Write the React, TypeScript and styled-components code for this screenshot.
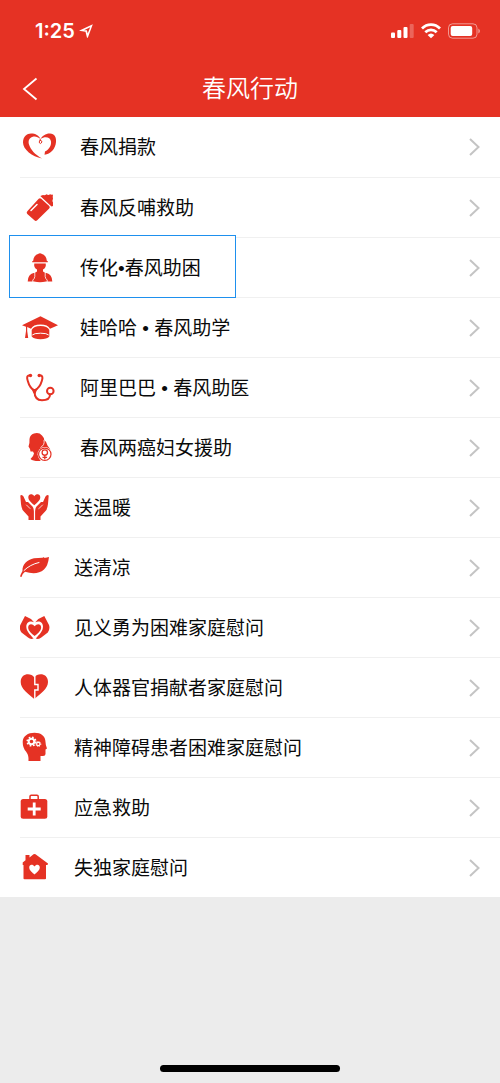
import React from 'react';
import styled, { createGlobalStyle } from 'styled-components';

const RED = '#e53224';

const GlobalStyle = createGlobalStyle`
  * { box-sizing: border-box; }
  body {
    margin: 0;
    background: #ececec;
    color: #0a0a0a;
    font-family: "Liberation Sans", "Noto Sans CJK SC", sans-serif;
  }
`;

const Page = styled.div`
  display: flex;
  flex-direction: column;
  min-height: 100vh;
`;

const Header = styled.header`
  background: ${RED};
  color: #fff;
`;

const StatusBar = styled.div`
  display: flex;
  align-items: center;
  justify-content: space-between;
  height: 60px;
  padding: 2px 20px 0 35px;
`;

const StatusGroup = styled.div<{ $gap: number }>`
  display: flex;
  align-items: center;
  gap: ${(p) => p.$gap}px;
`;

const Time = styled.time`
  font: 600 20px/24px Inter, sans-serif;
`;

const NavBar = styled.div`
  display: grid;
  grid-template-columns: 60px 1fr 60px;
  align-items: center;
  height: 57px;
`;

const BackButton = styled.button`
  display: flex;
  align-items: center;
  height: 54px;
  padding: 0 0 0 22px;
  border: 0;
  background: none;
  color: inherit;
  cursor: pointer;
`;

const Title = styled.h1`
  margin: 0;
  font-size: 24px;
  line-height: 32px;
  font-weight: 350;
  text-align: center;
`;

const List = styled.ul`
  margin: 0;
  padding: 0 0 0 20px;
  list-style: none;
  background: #fff;
`;

const Item = styled.li<{ $raised?: boolean }>`
  position: relative;
  z-index: ${(p) => (p.$raised ? 1 : 0)};
  height: 60px;

  & + & {
    border-top: 1px solid #f0f0f0;
  }
`;

const Highlight = styled.span`
  position: absolute;
  top: -3px;
  left: -11px;
  width: 227px;
  height: 63px;
  border: 1px solid #1e90ee;
  background: #fff;
  pointer-events: none;
`;

const RowLink = styled.a<{ $compact: boolean }>`
  position: relative;
  display: flex;
  align-items: center;
  gap: ${(p) => (p.$compact ? 24 : 20)}px;
  height: 100%;
  padding-right: 18px;
  color: inherit;
  text-decoration: none;
`;

const RowIcon = styled.svg<{ $compact: boolean }>`
  flex: none;
  width: ${(p) => (p.$compact ? 30 : 40)}px;
  height: 40px;
  fill: ${RED};
  stroke: none;
`;

const Label = styled.span`
  flex: 1;
  padding-top: 2px;
  font-size: 19px;
  line-height: 28px;
  white-space: nowrap;
`;

const HomeIndicator = styled.div`
  width: 36%;
  height: 7px;
  margin: auto auto 11px;
  border-radius: 4px;
  background: #000;
`;

const HEART = 'M0 4 C-2 1 -6 1.5 -6 5 C-6 8.5 -2 11 0 13 C2 11 6 8.5 6 5 C6 1.5 2 1 0 4Z';

const BrushHeart = (
  <>
    <path d="M22 31.500C12 29.500 3 22.500 3 15.500C3 9.500 7 6.500 11 6.500C15.500 6.500 19 8.500 20.500 12C18 9.800 15 9 12.800 9.800C9 11 8 14 9 17.500C10.500 22.500 15 27.500 22 31.500Z" />
    <path d="M20.500 12C22 9 26 6.300 30 6.500C34.500 7 36.500 10 36 15C35.500 22 30.500 27 24.500 27.800L25 24.500C29 22.500 31.500 18.500 31 14.500C30.500 10 25 8.800 20.500 12Z" />
    <path d="M20.500 12C18 15.500 20 17.500 21.300 16C22.500 14.500 21.500 13 20 13.500" fill="none" stroke={RED} />
  </>
);

const Bottle = (
  <>
    <path d="M18.700 10.800Q20 9.600 21.200 10.800L29.200 18Q30.400 19.200 29.200 20.500L17.200 32.300Q15.800 33.500 14.400 32.300L7.300 26Q6 24.700 7.300 23.300Z" />
    <path d="M20.300 8L23 7Q25 7.500 26.500 6.300Q28.500 7.500 30 6.300Q31.500 7 33 6.500Q32.500 9 33 10.500Q32 12.500 33 14.500V18L31.500 18.500Z" />
    <path d="M11 22.500L17 16.500" stroke="#fff" strokeWidth="1.500" strokeLinecap="round" />
  </>
);

const Worker = (
  <>
    <path d="M12.200 14.300V13.300L13.200 12.800Q13.500 7.500 18 6Q20 4.500 22 6Q26.500 7.500 26.800 12.800L27.800 13.300V14.300Z" />
    <path d="M14.300 15.500H25.700Q26.500 19.500 23 21.500V23.500L25.500 25H26.500Q32 26 32.300 33.500H26Q20 35 14 33.500H7.700Q8 26 13.500 25H14.500L17 23.500V21.500Q13.500 19.500 14.300 15.500Z" />
    <path d="M14.800 24.500V28.500Q14.500 31 12.800 32V34M25.200 24.500V28.500Q25.500 31 27.200 32V34" fill="none" stroke="#fff" strokeWidth="0.800" />
  </>
);

const GraduationCap = (
  <>
    <path d="M2 17.300L20.500 8.300L38 17.300L30 20.800Q28 16.500 20.500 16.500T11 20.800L7.200 19V23L8.200 30H5L6 23V18.800Z" />
    <path d="M11.700 22Q13.500 18 20.500 18T29.300 22V28.500Q27 31.300 20.500 31.300T11.700 28.500Z" />
    <path d="M12.300 27Q14 25.200 20.500 25.200T28.700 27" fill="none" stroke="#fff" strokeWidth="1" />
  </>
);

const Stethoscope = (
  <>
    <g fill="none" stroke={RED} strokeWidth="2" strokeLinecap="round">
      <path d="M10 7.300C6.500 7.300 6.800 10 7.800 13C9 17.500 10.500 20.500 14.500 22.500C18.500 20.500 20.500 17.500 21.800 13C22.800 10 23 7.300 19.500 7.300" />
      <path d="M14.500 23C14.500 29 17.500 32.300 22 32.300C27 32.300 30 30 30 26.500" />
      <circle cx="30.300" cy="23" r="3.300" />
    </g>
    <circle cx="10.500" cy="7.500" r="1.700" />
    <circle cx="19.200" cy="7.500" r="1.700" />
    <path d="M11 19.500L14.500 21.500L18 19.500L15.500 25.500H13.500Z" />
  </>
);

const Woman = (
  <>
    <path d="M9.500 11Q10 6.500 14 5.500Q19 4 22 7.500Q24 9.500 24.200 12Q27 14 27.500 17.500Q28.500 19 30.500 21.500Q26 19 21.500 21L19 26L20.500 33Q13.500 33.500 10.500 31Q13.500 28.500 14 25.500L13 23.500H10.500L10 21L8.500 18.500Q9.800 16 9.500 11Z" />
    <path d="M24 12Q25 17 20.500 19.500" fill="none" stroke="#fff" strokeWidth="0.800" />
    <circle cx="24.800" cy="26.300" r="7.200" fill="#fff" />
    <circle cx="24.800" cy="26.300" r="6.200" fill="#fff" stroke={RED} strokeWidth="1.200" />
    <g fill="none" stroke={RED} strokeWidth="1.300">
      <circle cx="24.800" cy="24.500" r="2.700" />
      <path d="M24.800 27V31.500M22.500 29.300H27.100" />
    </g>
  </>
);

const HandsHeart = (
  <>
    <path d={HEART} transform="translate(14.300 4.300)" />
    <path d="M0.300 7.500Q2 6 3.500 8.500L6 14L8 14L12.500 18.500Q13.900 20.500 13.900 23.500V32H8.500V28.500L3 22.500Q1.500 20.500 1 16Z" />
    <path d="M28.700 7.500Q27 6 25.500 8.500L23 14L21 14L16.500 18.500Q15.100 20.500 15.100 23.500V32H20.500V28.500L26 22.500Q27.500 20.500 28 16Z" />
    <path d="M6.500 17L10 20.500M22.500 17L19 20.500" stroke="#fff" strokeWidth="0.800" strokeLinecap="round" />
  </>
);

const Leaf = (
  <>
    <path d="M29 9Q28 18 24 21.500C19 26 12 25.800 5 23.800Q2.500 25.500 1.500 29L0 28.500Q1 25.500 2.500 23C2 17 7 11.500 14 10.300C20 9.300 25 10.500 29 9Z" />
    <path d="M4 22.500Q10 16.500 19 14.500" fill="none" stroke="#fff" strokeWidth="1" strokeLinecap="round" />
  </>
);

const CuppedHeart = (
  <>
    <path d="M5 8L11 11L14 14.300C10.500 12.300 6.300 14 6.300 18.500C6.300 23 9.500 26 13.600 30.500Q10.500 31.800 8 29.500L1.500 24.500Q-1 21 0.300 17Z" />
    <path d="M24.300 8L18.300 11L15.300 14.300C18.800 12.300 23 14 23 18.500C23 23 19.800 26 15.700 30.500Q18.800 31.800 21.300 29.500L27.800 24.500Q30.300 21 29 17Z" />
    <path d={HEART} transform="translate(14.650 14) scale(1.080)" />
  </>
);

const SplitHeart = (
  <>
    <path d="M14.300 9.500C11 4.500 0.700 5 0.700 14C0.700 21 8 25.500 14.300 31C20.600 25.500 28 21 28 14C28 5 17.600 4.500 14.300 9.500Z" />
    <path d="M14.800 7V16.500H18V22H14.800V32" fill="none" stroke="#fff" strokeWidth="1.400" />
  </>
);

const MindGears = (
  <>
    <path d="M2.700 14C2.700 8 8 4.700 14.500 4.700C21 4.700 25.500 8 25.500 14Q25.500 17 27 20.500L25.500 21.500V26Q25.500 28 23 28H20.500V33H8.500Q9 27.500 6 23.500Q2.700 20 2.700 14Z" />
    <circle cx="11.500" cy="13.500" r="2.800" fill="none" stroke="#fff" strokeWidth="2" />
    <circle cx="11.500" cy="13.500" r="4.300" fill="none" stroke="#fff" strokeWidth="1.600" strokeDasharray="1.700 1.677" />
    <circle cx="18.300" cy="16" r="1.700" fill="none" stroke="#fff" strokeWidth="1.200" />
    <circle cx="18.300" cy="16" r="2.500" fill="none" stroke="#fff" strokeDasharray="1 0.963" />
  </>
);

const FirstAid = (
  <>
    <path d="M10 11.500V8.500Q10 7.300 11.200 7.300H17Q18.200 7.300 18.200 8.500V11.500" fill="none" stroke={RED} strokeWidth="1.500" />
    <rect x="0.700" y="11" width="26.600" height="19.700" rx="2.500" />
    <path d="M14.200 14.500V27.500M7.700 21H20.700" stroke="#fff" strokeWidth="2.800" />
  </>
);

const HeartHouse = (
  <>
    <path d="M5.500 12.300V7H9.500V9.500L13.500 6.300Q14.500 5.600 15.500 6.300L28 15.500L27.500 17H26V30.500Q26 31.300 25 31.300H4.500Q3.500 31.300 3.500 30.500V17H2.700V14.500Z" />
    <path d={HEART} transform="translate(14.500 15) scale(0.880)" fill="#fff" />
  </>
);

type Entry = { label: string; icon: React.ReactNode; compact?: boolean; highlighted?: boolean };

const entries: Entry[] = [
  { label: '春风捐款', icon: BrushHeart },
  { label: '春风反哺救助', icon: Bottle },
  { label: '传化•春风助困', icon: Worker, highlighted: true },
  { label: '娃哈哈 • 春风助学', icon: GraduationCap },
  { label: '阿里巴巴 • 春风助医', icon: Stethoscope },
  { label: '春风两癌妇女援助', icon: Woman },
  { label: '送温暖', icon: HandsHeart, compact: true },
  { label: '送清凉', icon: Leaf, compact: true },
  { label: '见义勇为困难家庭慰问', icon: CuppedHeart, compact: true },
  { label: '人体器官捐献者家庭慰问', icon: SplitHeart, compact: true },
  { label: '精神障碍患者困难家庭慰问', icon: MindGears, compact: true },
  { label: '应急救助', icon: FirstAid, compact: true },
  { label: '失独家庭慰问', icon: HeartHouse, compact: true },
];

function Row({ label, icon, compact = false, highlighted }: Entry) {
  return (
    <Item $raised={highlighted}>
      {highlighted && <Highlight />}
      <RowLink href="#" $compact={compact}>
        <RowIcon $compact={compact} viewBox={compact ? '0 0 30 40' : '0 0 40 40'} aria-hidden="true">
          {icon}
        </RowIcon>
        <Label>{label}</Label>
        <svg width="14" height="20" viewBox="0 0 14 20" fill="none" stroke="#c4c4c4" strokeWidth="2" aria-hidden="true">
          <path d="M2 2L10.500 10L2 18" />
        </svg>
      </RowLink>
    </Item>
  );
}

export default function App() {
  return (
    <Page>
      <GlobalStyle />
      <Header>
        <StatusBar>
          <StatusGroup $gap={4}>
            <Time>1:25</Time>
            <svg width="14" height="14" viewBox="0 0 14 14" fill="#fff" fillRule="evenodd" aria-hidden="true">
              <path d="M0 6.800L13.800 0.300L8.800 13.800H8L6.500 7.700ZM5 6.300L7.900 6.300L8.700 9.500L11.200 3.200Z" />
            </svg>
          </StatusGroup>
          <StatusGroup $gap={7}>
            <svg width="23" height="16" viewBox="0 0 23 16" fill="#fff" aria-hidden="true">
              <rect x="0" y="9.500" width="4" height="5.500" rx="1" />
              <rect x="6.300" y="7" width="4" height="8" rx="1" />
              <rect x="12.500" y="4" width="4" height="11" rx="1" />
              <rect x="18.700" y="1" width="4" height="14" rx="1" opacity="0.250" />
            </svg>
            <svg width="20" height="16" viewBox="0 0 20 16" fill="none" stroke="#fff" strokeWidth="2.700" aria-hidden="true">
              <path d="M1 5.500C6 0.300 14 0.300 19 5.500M4.300 9.200C7.500 6 12.500 6 15.700 9.200" />
              <path d="M10 15.300L6.600 12Q10 9 13.400 12Z" fill="#fff" stroke="none" />
            </svg>
            <svg width="32" height="16" viewBox="0 0 32 16" fill="#fff" aria-hidden="true">
              <rect x="0.500" y="0.800" width="28.500" height="14.400" rx="4" fill="none" stroke="#fff" opacity="0.500" />
              <rect x="2.700" y="3" width="21.500" height="10" rx="2" />
              <path d="M30.300 5.500Q32 6.500 32 8T30.300 10.500Z" opacity="0.500" />
            </svg>
          </StatusGroup>
        </StatusBar>
        <NavBar>
          <BackButton type="button" aria-label="返回">
            <svg width="16" height="24" viewBox="0 0 16 24" fill="none" stroke="#fff" strokeWidth="1.800" aria-hidden="true">
              <path d="M14.500 1.500L2 12L14.500 22.500" />
            </svg>
          </BackButton>
          <Title>春风行动</Title>
        </NavBar>
      </Header>
      <main>
        <List>
          {entries.map((entry) => (
            <Row key={entry.label} {...entry} />
          ))}
        </List>
      </main>
      <HomeIndicator />
    </Page>
  );
}
